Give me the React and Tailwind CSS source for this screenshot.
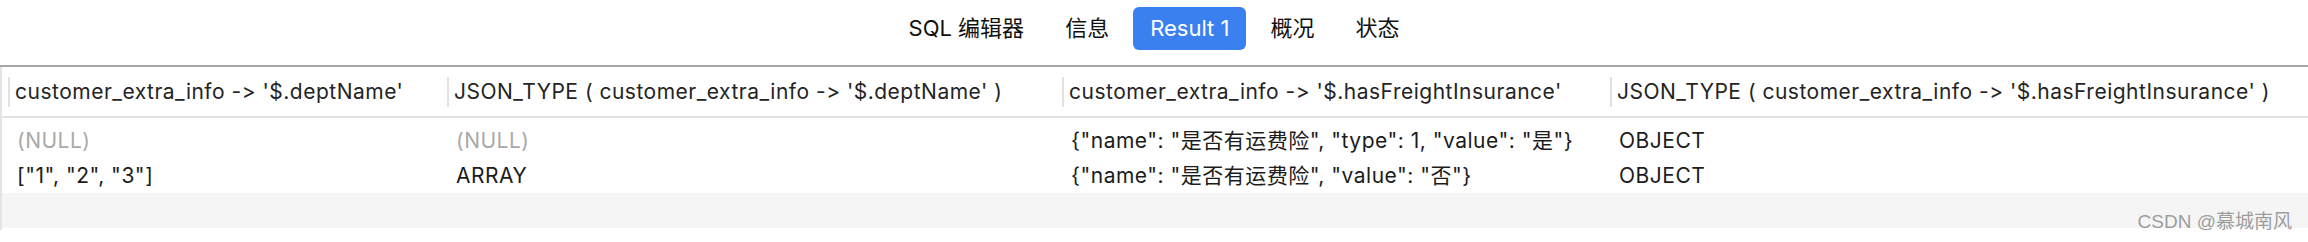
const tabs = ["SQL 编辑器", "信息", "Result 1", "概况", "状态"];

const columns = [
  { title: "customer_extra_info -> '$.deptName'", width: "w-[439px]" },
  { title: "JSON_TYPE ( customer_extra_info -> '$.deptName' )", width: "w-[615px]" },
  { title: "customer_extra_info -> '$.hasFreightInsurance'", width: "w-[548px]" },
  { title: "JSON_TYPE ( customer_extra_info -> '$.hasFreightInsurance' )", width: "flex-1" },
];

const rows = [
  [
    { v: "(NULL)", nul: true },
    { v: "(NULL)", nul: true },
    { v: '{"name": "是否有运费险", "type": 1, "value": "是"}' },
    { v: "OBJECT" },
  ],
  [
    { v: '["1", "2", "3"]' },
    { v: "ARRAY" },
    { v: '{"name": "是否有运费险", "value": "否"}' },
    { v: "OBJECT" },
  ],
  null, // empty striped row
];

export default function App() {
  return (
    <div className="relative w-[2308px] h-[242px] bg-white overflow-hidden font-['Inter','Noto_Sans_CJK_SC',sans-serif] text-[#1f1f1f]">
      {/* tab bar */}
      <div className="h-[65px] flex justify-center items-start pt-[7px] gap-[7px]">
        {tabs.map((t) => (
          <div
            key={t}
            className={
              t === "Result 1"
                ? "h-[43px] px-[17px] flex items-center rounded-[6px] bg-[#3b80f1] text-white text-[22px]"
                : "h-[43px] px-[17px] flex items-center rounded-[6px] text-[#111] text-[22px]"
            }
          >
            {t}
          </div>
        ))}
      </div>
      <div className="h-[2px] bg-[#a6a6a6]" />

      {/* grid */}
      <div className="h-[163px] border-l-[2px] border-[#e4e4e4] text-[21px] tracking-[0.5px]">
        <div className="h-[51px] flex items-center pl-[6px] border-b-[2px] border-[#e3e3e3]">
          {columns.map((c) => (
            <div key={c.title} className={c.width + " shrink-0"}>
              <div className="h-[30px] flex items-center border-l-[2px] border-[#e2e2e2] pl-[5px] whitespace-nowrap text-[#242424]">
                {c.title}
              </div>
            </div>
          ))}
        </div>
        <div className="pt-[5px]">
          {rows.map((r, i) => (
            <div
              key={i}
              className={
                r ? "h-[35px] flex items-center pl-[6px]" : "h-[35px] flex items-center pl-[6px] bg-[#f5f5f5]"
              }
            >
              {r &&
                r.map((cell, j) => (
                  <div key={j} className={columns[j].width + " shrink-0"}>
                    <div
                      className={
                        cell.nul
                          ? "pl-[9px] whitespace-nowrap text-[#a9a9a9]"
                          : "pl-[9px] whitespace-nowrap text-[#1c1c1c]"
                      }
                    >
                      {cell.v}
                    </div>
                  </div>
                ))}
            </div>
          ))}
        </div>
      </div>

      {/* watermark */}
      <div className="absolute right-[16px] top-[208px] text-[19px] text-[#9c9c9c] [text-shadow:0_0_1px_#fff] font-['Liberation_Sans','Noto_Sans_CJK_SC',sans-serif]">
        CSDN @慕城南风
      </div>
    </div>
  );
}
